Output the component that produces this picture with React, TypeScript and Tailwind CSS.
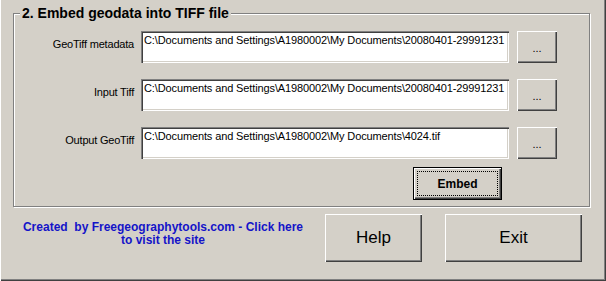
import React from "react";

const font = { fontFamily: '"Liberation Sans", Arial, sans-serif' };

const raised =
  "bg-[#D4D0C8] shadow-[inset_1px_1px_0_#ffffff,inset_-1px_-1px_0_#404040,inset_-2px_-2px_0_#808080]";
const sunken =
  "bg-white shadow-[inset_1px_1px_0_#808080,inset_2px_2px_0_#404040,inset_-1px_-1px_0_#ffffff,inset_-2px_-2px_0_#D4D0C8]";

function Row({ label, value }: { label: string; value: string }) {
  return (
    <div className="flex items-start h-[32px]">
      <div className="w-[120px] text-right text-[11px] leading-[13px] mt-[7px] tracking-[-0.2px] text-black">
        {label}
      </div>
      <div
        className={`ml-[7px] w-[368px] h-[32px] ${sunken} overflow-hidden whitespace-nowrap pl-[3px] pt-[3px] text-[11px] leading-[13px] tracking-[-0.12px] text-black`}
      >
        {value}
      </div>
      <button
        className={`ml-[8px] w-[40px] h-[32px] ${raised} flex items-center justify-center text-[11px] leading-[13px] text-black pt-[2px]`}
      >
        ...
      </button>
    </div>
  );
}

export default function App() {
  return (
    <div
      style={font}
      className="w-[606px] h-[281px] bg-[#D4D0C8] overflow-hidden shadow-[inset_1px_0_0_#ffffff,inset_-1px_-1px_0_#404040,inset_-2px_-2px_0_#808080] pt-[13px] pl-[13px]"
    >
      <div className="relative w-[577px] h-[194px] border border-[#808080] shadow-[1px_1px_0_#ffffff,inset_1px_1px_0_#ffffff]">
        <div className="absolute left-[6px] top-[-9px] bg-[#D4D0C8] px-[2px] text-[14px] leading-[16px] font-bold text-black">
          2. Embed geodata into TIFF file
        </div>
        <div className="pt-[17px] flex flex-col gap-[16px]">
          <Row
            label="GeoTiff metadata"
            value="C:\Documents and Settings\A1980002\My Documents\20080401-29991231"
          />
          <Row
            label="Input Tiff"
            value="C:\Documents and Settings\A1980002\My Documents\20080401-29991231"
          />
          <Row
            label="Output GeoTiff"
            value="C:\Documents and Settings\A1980002\My Documents\4024.tif"
          />
        </div>
        <div className="mt-[8px] ml-[399px]">
          <button className="w-[89px] h-[33px] border border-black bg-[#D4D0C8] shadow-[inset_1px_1px_0_#ffffff,inset_-1px_-1px_0_#404040,inset_-2px_-2px_0_#808080] p-[3px]">
            <div className="w-full h-full border border-dotted border-black flex items-center justify-center text-[12px] font-bold text-black">
              Embed
            </div>
          </button>
        </div>
      </div>
      <div className="flex items-start mt-[7px]">
        <div className="w-[300px] mt-[7px] text-center text-[12px] leading-[13px] font-bold text-[#1414C8] cursor-pointer">
          Created&nbsp; by Freegeographytools.com - Click here
          <br />
          to visit the site
        </div>
        <button
          className={`ml-[12px] w-[97px] h-[48px] ${raised} flex items-center justify-center text-[17px] text-black`}
        >
          Help
        </button>
        <button
          className={`ml-[23px] w-[137px] h-[48px] ${raised} flex items-center justify-center text-[17px] text-black`}
        >
          Exit
        </button>
      </div>
    </div>
  );
}
